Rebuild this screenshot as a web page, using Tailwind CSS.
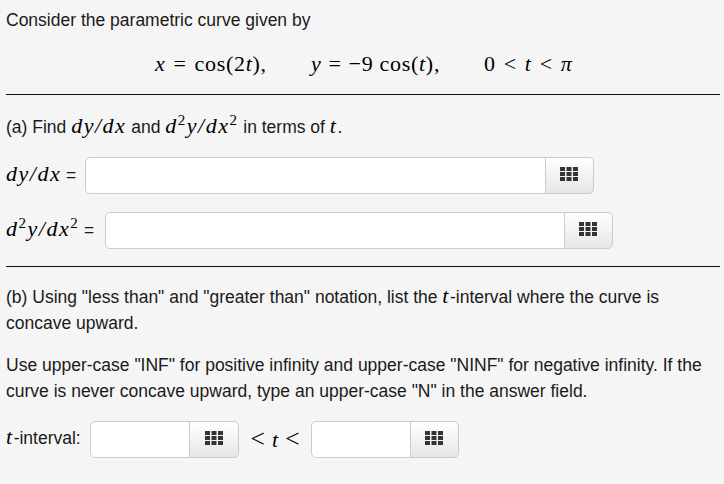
<!doctype html>
<html>
<head>
  <title>Parametric curve</title>
  <meta charset="UTF-8">
  <script src="https://cdn.jsdelivr.net/npm/@tailwindcss/browser@4"></script>
</head>
<body class="bg-[#f5f5f5] text-[17.5px] leading-[25.6px] text-[#1a1a1a] font-['Liberation_Sans',sans-serif]">
<div class="w-[724px] h-[484px] overflow-hidden pl-[6px] pr-[4px] pt-[8px]">

  <p>Consider the parametric curve given by</p>

  <div class="flex h-[26px] mt-[17px] ml-[149px] text-[22px] leading-[26px] tracking-[0.7px] font-['Liberation_Serif',serif] text-black">
    <span class="w-[156px]"><i>x</i><span class="mx-[8px]">=</span>cos(2<i>t</i>),</span>
    <span class="w-[173px]"><i>y</i><span class="mx-[7px]">=</span>&minus;9 cos(<i>t</i>),</span>
    <span>0<span class="mx-[8px]">&lt;</span><i>t</i><span class="mx-[8px]">&lt;</span><i>π</i></span>
  </div>

  <hr class="mt-[17px] border-t border-[#111]">

  <p class="mt-[20px]">(a) Find <i class="font-['Liberation_Serif',serif] text-[22px] leading-none tracking-[1.5px] text-black">dy/dx</i> and <i class="font-['Liberation_Serif',serif] text-[22px] leading-none tracking-[1.5px] text-black">d<sup class="text-[15px] not-italic">2</sup>y/dx<sup class="text-[15px] not-italic">2</sup></i> in terms of <i class="font-['Liberation_Serif',serif] text-[22px] leading-none tracking-[1.5px] text-black">t</i>.</p>

  <div class="flex items-center mt-[17px] h-[37px]">
    <span class="w-[79px] shrink-0"><i class="font-['Liberation_Serif',serif] text-[22px] leading-none tracking-[1.5px] text-black">dy/dx</i> =</span>
    <div class="w-[461px] h-[37px] bg-white border border-[#ccc] rounded-l-[5px]"></div>
    <button class="w-[49px] h-[37px] -ml-px pb-[3px] pr-[1px] flex items-center justify-center border border-[#ccc] rounded-r-[5px] bg-gradient-to-b from-white to-[#e6e6e6]">
      <svg width="18" height="14" viewBox="0 0 18 14" fill="#333"><rect x="0" y="0" width="5" height="4"/><rect x="6.5" y="0" width="5" height="4"/><rect x="13" y="0" width="5" height="4"/><rect x="0" y="5" width="5" height="4"/><rect x="6.5" y="5" width="5" height="4"/><rect x="13" y="5" width="5" height="4"/><rect x="0" y="10" width="5" height="4"/><rect x="6.5" y="10" width="5" height="4"/><rect x="13" y="10" width="5" height="4"/></svg>
    </button>
  </div>

  <div class="flex items-center mt-[18px] h-[37px]">
    <span class="w-[99px] shrink-0"><i class="font-['Liberation_Serif',serif] text-[22px] leading-none tracking-[1.5px] text-black">d<sup class="text-[15px] not-italic">2</sup>y/dx<sup class="text-[15px] not-italic">2</sup></i> =</span>
    <div class="w-[460px] h-[37px] bg-white border border-[#ccc] rounded-l-[5px]"></div>
    <button class="w-[49px] h-[37px] -ml-px pb-[3px] pr-[1px] flex items-center justify-center border border-[#ccc] rounded-r-[5px] bg-gradient-to-b from-white to-[#e6e6e6]">
      <svg width="18" height="14" viewBox="0 0 18 14" fill="#333"><rect x="0" y="0" width="5" height="4"/><rect x="6.5" y="0" width="5" height="4"/><rect x="13" y="0" width="5" height="4"/><rect x="0" y="5" width="5" height="4"/><rect x="6.5" y="5" width="5" height="4"/><rect x="13" y="5" width="5" height="4"/><rect x="0" y="10" width="5" height="4"/><rect x="6.5" y="10" width="5" height="4"/><rect x="13" y="10" width="5" height="4"/></svg>
    </button>
  </div>

  <hr class="mt-[17px] border-t border-[#111]">

  <p class="mt-[18px]">(b) Using "less than" and "greater than" notation, list the <i class="font-['Liberation_Serif',serif] text-[22px] leading-none tracking-[1.5px] text-black">t</i>-interval where the curve is concave upward.</p>

  <p class="mt-[17px]">Use upper-case "INF" for positive infinity and upper-case "NINF" for negative infinity. If the curve is never concave upward, type an upper-case "N" in the answer field.</p>

  <div class="flex items-center mt-[16px] h-[37px]">
    <span class="w-[84px] shrink-0"><i class="font-['Liberation_Serif',serif] text-[22px] leading-none tracking-[1.5px] text-black">t</i>-interval:</span>
    <div class="w-[100px] h-[37px] bg-white border border-[#ccc] rounded-l-[5px]"></div>
    <button class="w-[50px] h-[37px] -ml-px pb-[3px] pr-[1px] flex items-center justify-center border border-[#ccc] rounded-r-[5px] bg-gradient-to-b from-white to-[#e6e6e6]">
      <svg width="18" height="14" viewBox="0 0 18 14" fill="#333"><rect x="0" y="0" width="5" height="4"/><rect x="6.5" y="0" width="5" height="4"/><rect x="13" y="0" width="5" height="4"/><rect x="0" y="5" width="5" height="4"/><rect x="6.5" y="5" width="5" height="4"/><rect x="13" y="5" width="5" height="4"/><rect x="0" y="10" width="5" height="4"/><rect x="6.5" y="10" width="5" height="4"/><rect x="13" y="10" width="5" height="4"/></svg>
    </button>
    <span class="w-[72px] text-center text-[22px] font-['Liberation_Serif',serif] text-black"><span class="mx-[7px] text-[26px]">&lt;</span><i>t</i><span class="mx-[7px] text-[26px]">&lt;</span></span>
    <div class="w-[100px] h-[37px] bg-white border border-[#ccc] rounded-l-[5px]"></div>
    <button class="w-[49px] h-[37px] -ml-px pb-[3px] pr-[1px] flex items-center justify-center border border-[#ccc] rounded-r-[5px] bg-gradient-to-b from-white to-[#e6e6e6]">
      <svg width="18" height="14" viewBox="0 0 18 14" fill="#333"><rect x="0" y="0" width="5" height="4"/><rect x="6.5" y="0" width="5" height="4"/><rect x="13" y="0" width="5" height="4"/><rect x="0" y="5" width="5" height="4"/><rect x="6.5" y="5" width="5" height="4"/><rect x="13" y="5" width="5" height="4"/><rect x="0" y="10" width="5" height="4"/><rect x="6.5" y="10" width="5" height="4"/><rect x="13" y="10" width="5" height="4"/></svg>
    </button>
  </div>

</div>
</body>
</html>
